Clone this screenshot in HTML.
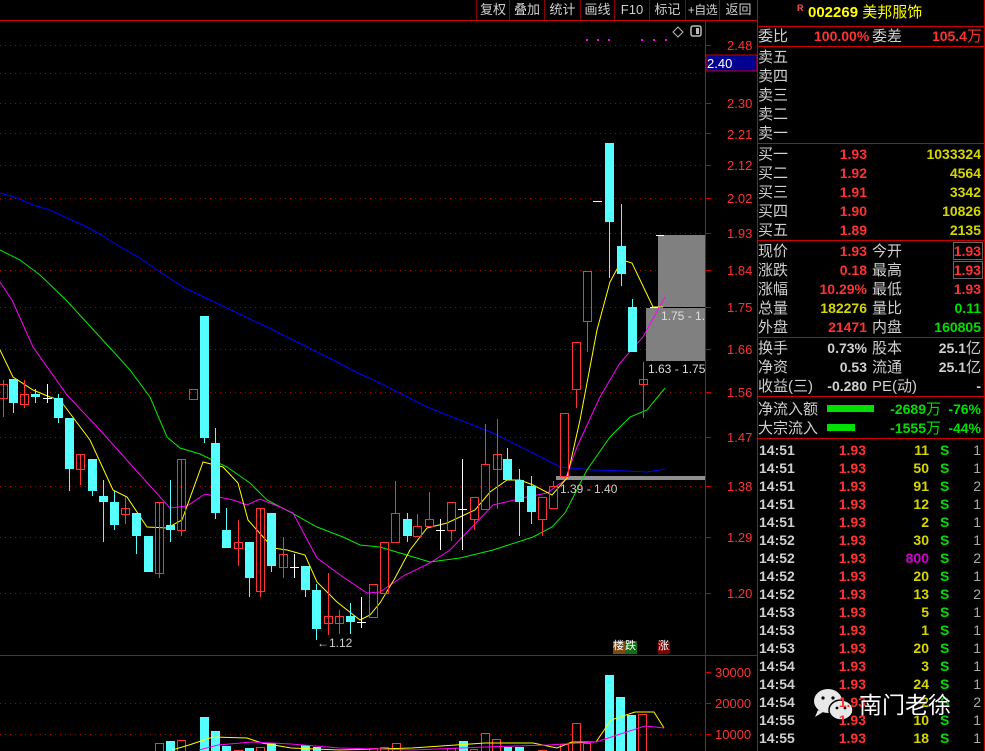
<!DOCTYPE html>
<html><head><meta charset="utf-8"><style>
*{margin:0;padding:0;box-sizing:border-box}
body{width:985px;height:751px;background:#000;overflow:hidden;position:relative;font-family:"Liberation Sans","Noto Sans CJK SC",sans-serif;}
.a{position:absolute;white-space:nowrap;line-height:1}
.tb{position:absolute;top:0;height:20px;color:#d0d0d0;font-size:13px;text-align:center;line-height:20px;border-left:1px solid #800;white-space:nowrap;overflow:hidden}
.rp{position:absolute;left:757px;font-size:15px;line-height:19px;white-space:nowrap}
.l{color:#d0d0d0}
.r{color:#ff3232}.y{color:#d6d600}.g{color:#00e000}.w{color:#d0d0d0}.m{color:#d000d0}
.hl{position:absolute;left:757px;width:228px;height:1px;background:#c00}
.ax{font-size:13px}
</style></head><body>
<svg width="985" height="751" style="position:absolute;left:0;top:0">
<line x1="0" y1="20.5" x2="757" y2="20.5" stroke="#c00"/>
<line x1="705.5" y1="20" x2="705.5" y2="751" stroke="#c00"/>
<line x1="757.5" y1="0" x2="757.5" y2="751" stroke="#c00"/>
<line x1="984.5" y1="0" x2="984.5" y2="751" stroke="#c00"/>
<line x1="0" y1="655.5" x2="757" y2="655.5" stroke="#c00"/>
<g stroke="#a00000" stroke-dasharray="1,4">
<line x1="0" y1="45.5" x2="705" y2="45.5"/><line x1="0" y1="73.5" x2="705" y2="73.5"/><line x1="0" y1="103.5" x2="705" y2="103.5"/><line x1="0" y1="133.5" x2="705" y2="133.5"/><line x1="0" y1="165.5" x2="705" y2="165.5"/><line x1="0" y1="198.5" x2="705" y2="198.5"/><line x1="0" y1="233.5" x2="705" y2="233.5"/><line x1="0" y1="270.5" x2="705" y2="270.5"/><line x1="0" y1="307.5" x2="705" y2="307.5"/><line x1="0" y1="349.5" x2="705" y2="349.5"/><line x1="0" y1="392.5" x2="705" y2="392.5"/><line x1="0" y1="437.5" x2="705" y2="437.5"/><line x1="0" y1="486.5" x2="705" y2="486.5"/><line x1="0" y1="537.5" x2="705" y2="537.5"/><line x1="0" y1="593.5" x2="705" y2="593.5"/>
<line x1="0" y1="703.5" x2="705" y2="703.5"/><line x1="0" y1="734.5" x2="705" y2="734.5"/>
</g>
<g stroke="#c00">
<line x1="705" y1="45.5" x2="711" y2="45.5"/><line x1="705" y1="103.5" x2="711" y2="103.5"/><line x1="705" y1="133.5" x2="711" y2="133.5"/><line x1="705" y1="165.5" x2="711" y2="165.5"/><line x1="705" y1="198.5" x2="711" y2="198.5"/><line x1="705" y1="233.5" x2="711" y2="233.5"/><line x1="705" y1="270.5" x2="711" y2="270.5"/><line x1="705" y1="307.5" x2="711" y2="307.5"/><line x1="705" y1="349.5" x2="711" y2="349.5"/><line x1="705" y1="392.5" x2="711" y2="392.5"/><line x1="705" y1="437.5" x2="711" y2="437.5"/><line x1="705" y1="486.5" x2="711" y2="486.5"/><line x1="705" y1="537.5" x2="711" y2="537.5"/><line x1="705" y1="593.5" x2="711" y2="593.5"/>
<line x1="705" y1="672.5" x2="711" y2="672.5"/><line x1="705" y1="703.5" x2="711" y2="703.5"/><line x1="705" y1="734.5" x2="711" y2="734.5"/>
</g>
<rect x="706" y="55" width="51" height="16" fill="#000090" stroke="#c00"/>
<rect x="658" y="235" width="47" height="72" fill="#808080"/>
<rect x="646" y="307" width="59" height="54" fill="#808080"/>
<line x1="646" y1="307.5" x2="705" y2="307.5" stroke="#000"/>
<rect x="556" y="476" width="149" height="4" fill="#909090"/>
<polyline fill="none" stroke="#0000ff" points="0,193 17,198 33,205 50,210 67,218 83,225 100,234 117,245 140,258 160,272 185,288 210,300 267,327 333,360 360,374 380,383 427,407 493,433 533,453 560,467 593,470 627,471 647,472 665,469"/>
<polyline fill="none" stroke="#00ee00" points="0,250 20,260 40,275 66,300 100,337 130,370 150,397 167,437 180,448 200,454 227,467 250,483 267,500 290,512 317,527 343,537 360,545 380,547 410,556 430,562 460,558 493,550 533,537 552,527 565,513 587,470 610,437 630,417 647,410 665,388"/>
<polyline fill="none" stroke="#ff00ff" points="0,282 12,300 33,347 67,395 100,430 133,467 170,508 187,506 205,494 233,500 247,505 260,499 280,507 293,513 317,558 343,577 367,593 380,592 405,575 430,563 450,550 493,505 527,497 547,493 565,480 577,447 600,397 620,363 643,337 665,297"/>
<polyline fill="none" stroke="#ffff00" points="0,350 13,377 33,390 50,397 60,400 90,440 113,490 127,497 147,527 167,528 182,520 203,462 223,467 238,483 248,520 273,548 287,550 305,555 317,582 337,602 360,620 370,615 380,603 395,578 410,550 427,528 447,523 475,510 490,492 507,480 520,480 533,485 552,495 567,478 580,420 597,330 610,282 622,260 632,263 653,307 663,307"/>
<g stroke="#ff3232" fill="none">
<line x1="3.5" y1="380" x2="3.5" y2="417"/><rect x="-0.5" y="384.5" width="8" height="14"/>
<line x1="24.5" y1="380" x2="24.5" y2="408"/><rect x="20.5" y="394.5" width="8" height="10"/>
<line x1="80.5" y1="454" x2="80.5" y2="485"/><rect x="76.5" y="454.5" width="8" height="15"/>
<line x1="125.5" y1="497" x2="125.5" y2="524"/><rect x="121.5" y="508.5" width="8" height="6"/>
<line x1="159.5" y1="502" x2="159.5" y2="578"/><rect x="155.5" y="502.5" width="8" height="71"/>
<line x1="181.5" y1="459" x2="181.5" y2="536"/><rect x="177.5" y="459.5" width="8" height="71"/>
<rect x="189.5" y="389.5" width="8" height="10"/>
<line x1="238.5" y1="520" x2="238.5" y2="566"/><rect x="234.5" y="542.5" width="8" height="6"/>
<line x1="260.5" y1="508" x2="260.5" y2="597"/><rect x="256.5" y="508.5" width="8" height="83"/>
<line x1="283.5" y1="537" x2="283.5" y2="578"/><rect x="279.5" y="554.5" width="8" height="13"/>
<line x1="328.5" y1="573" x2="328.5" y2="635"/><rect x="324.5" y="616.5" width="8" height="7"/>
<line x1="339.5" y1="610" x2="339.5" y2="634"/><rect x="335.5" y="616.5" width="8" height="7"/>
<rect x="369.5" y="584.5" width="8" height="33"/>
<rect x="380.5" y="542.5" width="8" height="51"/>
<line x1="395.5" y1="481" x2="395.5" y2="513"/><rect x="391.5" y="513.5" width="8" height="29"/>
<line x1="417.5" y1="514" x2="417.5" y2="526"/><rect x="413.5" y="526.5" width="8" height="10"/>
<line x1="429.5" y1="492" x2="429.5" y2="519"/><rect x="425.5" y="519.5" width="8" height="7"/>
<line x1="451.5" y1="530" x2="451.5" y2="541"/><rect x="447.5" y="502.5" width="8" height="28"/>
<line x1="474.5" y1="519" x2="474.5" y2="530"/><rect x="470.5" y="497.5" width="8" height="22"/>
<line x1="485.5" y1="424" x2="485.5" y2="464"/><rect x="481.5" y="464.5" width="8" height="45"/>
<line x1="497.5" y1="419" x2="497.5" y2="509"/><rect x="493.5" y="454.5" width="8" height="15"/>
<line x1="542.5" y1="519" x2="542.5" y2="536"/><rect x="538.5" y="497.5" width="8" height="22"/>
<line x1="553.5" y1="481" x2="553.5" y2="486"/><rect x="549.5" y="486.5" width="8" height="22"/>
<rect x="560.5" y="413.5" width="8" height="63"/>
<line x1="576.5" y1="389" x2="576.5" y2="408"/><rect x="572.5" y="342.5" width="8" height="47"/>
<line x1="587.5" y1="321" x2="587.5" y2="352"/><rect x="583.5" y="271.5" width="8" height="50"/>
<line x1="643.5" y1="362" x2="643.5" y2="418"/><rect x="639.5" y="379.5" width="8" height="5"/>
</g>
<g fill="#55ffff" stroke="#55ffff">
<line x1="13.5" y1="379" x2="13.5" y2="413"/><rect x="9" y="379" width="9" height="24" stroke="none"/>
<line x1="35.5" y1="389" x2="35.5" y2="403"/><rect x="31" y="394" width="9" height="3" stroke="none"/>
<line x1="58.5" y1="394" x2="58.5" y2="423"/><rect x="54" y="398" width="9" height="20" stroke="none"/>
<line x1="69.5" y1="418" x2="69.5" y2="491"/><rect x="65" y="418" width="9" height="51" stroke="none"/>
<line x1="92.5" y1="459" x2="92.5" y2="496"/><rect x="88" y="459" width="9" height="32" stroke="none"/>
<line x1="103.5" y1="480" x2="103.5" y2="542"/><rect x="99" y="496" width="9" height="6" stroke="none"/>
<line x1="114.5" y1="491" x2="114.5" y2="530"/><rect x="110" y="502" width="9" height="23" stroke="none"/>
<line x1="136.5" y1="513" x2="136.5" y2="554"/><rect x="132" y="513" width="9" height="23" stroke="none"/>
<rect x="144" y="536" width="9" height="36" stroke="none"/>
<line x1="170.5" y1="480" x2="170.5" y2="542"/><rect x="166" y="525" width="9" height="5" stroke="none"/>
<line x1="204.5" y1="316" x2="204.5" y2="443"/><rect x="200" y="316" width="9" height="122" stroke="none"/>
<line x1="215.5" y1="428" x2="215.5" y2="519"/><rect x="211" y="443" width="9" height="70" stroke="none"/>
<line x1="226.5" y1="508" x2="226.5" y2="548"/><rect x="222" y="530" width="9" height="18" stroke="none"/>
<line x1="249.5" y1="542" x2="249.5" y2="597"/><rect x="245" y="542" width="9" height="36" stroke="none"/>
<line x1="271.5" y1="513" x2="271.5" y2="572"/><rect x="267" y="513" width="9" height="53" stroke="none"/>
<line x1="305.5" y1="566" x2="305.5" y2="597"/><rect x="301" y="566" width="9" height="24" stroke="none"/>
<line x1="316.5" y1="584" x2="316.5" y2="640"/><rect x="312" y="590" width="9" height="39" stroke="none"/>
<line x1="350.5" y1="603" x2="350.5" y2="634"/><rect x="346" y="616" width="9" height="6" stroke="none"/>
<line x1="407.5" y1="513" x2="407.5" y2="542"/><rect x="403" y="519" width="9" height="17" stroke="none"/>
<line x1="507.5" y1="448" x2="507.5" y2="480"/><rect x="503" y="459" width="9" height="21" stroke="none"/>
<line x1="519.5" y1="469" x2="519.5" y2="536"/><rect x="515" y="480" width="9" height="22" stroke="none"/>
<line x1="531.5" y1="476" x2="531.5" y2="524"/><rect x="527" y="486" width="9" height="26" stroke="none"/>
<line x1="609.5" y1="143" x2="609.5" y2="278"/><rect x="605" y="143" width="9" height="79" stroke="none"/>
<line x1="621.5" y1="204" x2="621.5" y2="286"/><rect x="617" y="246" width="9" height="28" stroke="none"/>
<line x1="632.5" y1="299" x2="632.5" y2="352"/><rect x="628" y="307" width="9" height="45" stroke="none"/>
</g>
<g stroke="#fff">
<line x1="47.5" y1="384" x2="47.5" y2="403"/><line x1="43" y1="398.5" x2="52" y2="398.5"/>
<line x1="294.5" y1="554" x2="294.5" y2="578"/><line x1="290" y1="567.5" x2="299" y2="567.5"/>
<line x1="361.5" y1="597" x2="361.5" y2="628"/><line x1="357" y1="622.5" x2="366" y2="622.5"/>
<line x1="440.5" y1="519" x2="440.5" y2="550"/><line x1="436" y1="530.5" x2="445" y2="530.5"/>
<line x1="462.5" y1="459" x2="462.5" y2="550"/><line x1="458" y1="509.5" x2="467" y2="509.5"/>
<line x1="593" y1="201.5" x2="602" y2="201.5"/>
<line x1="656" y1="235.5" x2="664" y2="235.5"/><line x1="650" y1="307.5" x2="658" y2="307.5"/>
</g>
<g fill="#ff00ff"><rect x="586" y="39" width="2" height="2"/><rect x="597" y="39" width="2" height="2"/><rect x="608" y="39" width="2" height="2"/><rect x="641" y="39" width="2" height="2"/><rect x="653" y="39" width="2" height="2"/><rect x="665" y="39" width="2" height="2"/></g>
<path d="M678 27 L683 32 L678 37 L673 32 Z" fill="none" stroke="#bbb"/>
<rect x="691" y="26" width="10" height="10" rx="2" fill="none" stroke="#bbb" stroke-width="1.5"/><rect x="696" y="28" width="3" height="6" fill="#bbb"/>
<g fill="none" stroke="#ff3232">
<rect x="155.5" y="743.5" width="8" height="10"/><rect x="177.5" y="740.5" width="8" height="14"/><rect x="234.5" y="750.5" width="8" height="4"/><rect x="256.5" y="747.5" width="8" height="8"/>
<rect x="369.5" y="748.5" width="8" height="6"/><rect x="380.5" y="747.5" width="8" height="6"/><rect x="392.5" y="743.5" width="8" height="10"/>
<rect x="447.5" y="748.5" width="8" height="6"/><rect x="470.5" y="749.5" width="7" height="6"/><rect x="481.5" y="733.5" width="8" height="20"/><rect x="492.5" y="739.5" width="8" height="14"/>
<rect x="538.5" y="750.5" width="8" height="4"/><rect x="560.5" y="744.5" width="8" height="10"/><rect x="572.5" y="723.5" width="8" height="30"/><rect x="583.5" y="743.5" width="7" height="10"/><rect x="638.5" y="714.5" width="8" height="40"/>
</g>
<g fill="#55ffff">
<rect x="166" y="741" width="9" height="10"/><rect x="200" y="717" width="9" height="34"/><rect x="211" y="731" width="9" height="20"/><rect x="222" y="746" width="9" height="5"/><rect x="245" y="748" width="9" height="3"/><rect x="267" y="743" width="9" height="8"/>
<rect x="301" y="745" width="9" height="6"/><rect x="313" y="747" width="8" height="4"/><rect x="459" y="741" width="9" height="10"/><rect x="504" y="747" width="8" height="4"/><rect x="515" y="747" width="9" height="4"/>
<rect x="605" y="675" width="9" height="76"/><rect x="616" y="697" width="9" height="54"/><rect x="627" y="715" width="9" height="36"/>
</g>
<polyline fill="none" stroke="#ffff00" points="172,750 189,745 213,737 247,738 262,743 291,748 339,750 412,748 485,743 533,743 557,748 572,742 596,742 611,720 635,712 654,712 664,728"/>
<polyline fill="none" stroke="#ff00ff" points="199,750 218,745 252,742 291,744 339,748 412,750 485,747 548,745 596,742 645,726 655,727 664,728"/>
<ellipse cx="828" cy="701" rx="14" ry="12" fill="#e8e8e8"/><path d="M818 710 L815 717 L823 712 Z" fill="#e8e8e8"/>
<ellipse cx="841" cy="710" rx="12" ry="10" fill="#e8e8e8" stroke="#000" stroke-width="1.5"/>
<circle cx="823" cy="698" r="1.6" fill="#000"/><circle cx="833" cy="698" r="1.6" fill="#000"/><circle cx="837" cy="708" r="1.4" fill="#000"/><circle cx="845" cy="708" r="1.4" fill="#000"/>
</svg>
<div class="tb" style="left:476px;width:33px">复权</div><div class="tb" style="left:509px;width:35px">叠加</div><div class="tb" style="left:544px;width:36px">统计</div><div class="tb" style="left:580px;width:34px">画线</div><div class="tb" style="left:614px;width:35px">F10</div><div class="tb" style="left:649px;width:36px">标记</div><div class="tb" style="left:685px;width:34px;font-size:12px;letter-spacing:-0.5px">+自选</div><div class="tb" style="left:719px;width:38px">返回</div>
<div class="a r ax" style="left:727px;top:39px">2.48</div>
<div class="a ax" style="left:707px;top:57px;color:#fff">2.40</div>
<div class="a r ax" style="left:727px;top:97px">2.30</div><div class="a r ax" style="left:727px;top:128px">2.21</div><div class="a r ax" style="left:727px;top:159px">2.12</div><div class="a r ax" style="left:727px;top:192px">2.02</div><div class="a r ax" style="left:727px;top:227px">1.93</div><div class="a r ax" style="left:727px;top:264px">1.84</div><div class="a r ax" style="left:727px;top:301px">1.75</div><div class="a r ax" style="left:727px;top:343px">1.66</div><div class="a r ax" style="left:727px;top:386px">1.56</div><div class="a r ax" style="left:727px;top:431px">1.47</div><div class="a r ax" style="left:727px;top:480px">1.38</div><div class="a r ax" style="left:727px;top:531px">1.29</div><div class="a r ax" style="left:727px;top:587px">1.20</div>
<div class="a r ax" style="left:715px;top:666px">30000</div><div class="a r ax" style="left:715px;top:697px">20000</div><div class="a r ax" style="left:715px;top:728px">10000</div>
<div class="a" style="font-size:12px;left:661px;top:310px;color:#ddd">1.75 - 1.</div>
<div class="a" style="font-size:12px;left:648px;top:363px;color:#ddd">1.63 - 1.75</div>
<div class="a" style="font-size:12px;left:560px;top:483px;color:#ccc">1.39 - 1.40</div>
<div class="a" style="font-size:12px;left:317px;top:637px;color:#ccc">←1.12</div>
<div class="a" style="font-size:11px;left:613px;top:641px;color:#fff;background:#7a4a10;width:12px;height:13px">楼</div>
<div class="a" style="font-size:11px;left:625px;top:641px;color:#fff;background:#107010;width:12px;height:13px">跌</div>
<div class="a" style="font-size:11px;left:658px;top:641px;color:#fff;background:#800000;width:12px;height:13px">涨</div>
<div class="hl" style="top:26px"></div><div class="hl" style="top:46px"></div><div class="hl" style="top:143px"></div><div class="hl" style="top:240px"></div><div class="hl" style="top:337px"></div><div class="hl" style="top:396px"></div><div class="hl" style="top:438px"></div>
<div class="a" style="left:797px;top:4px;font-size:9px;color:#ff5050;font-weight:bold">R</div>
<div class="a y" style="left:808px;top:5px;font-size:15px;font-weight:bold;color:#ffff00">002269 <span style="font-weight:normal">美邦服饰</span></div>
<div class="rp" style="top:27px;width:228px"><span class="l" style="position:absolute;left:1px">委比</span><span class="r" style="position:absolute;left:57px;font-weight:bold;font-size:14px">100.00%</span><span class="l" style="position:absolute;left:115px">委差</span><span class="r" style="position:absolute;right:3px;font-weight:bold;font-size:14px">105.4<span style="font-weight:normal;font-size:15px">万</span></span></div>
<div class="rp l" style="top:48px;left:758px">卖五<br>卖四<br>卖三<br>卖二<br>卖一</div>
<div class="rp l" style="top:145px;left:758px">买一<br>买二<br>买三<br>买四<br>买五</div>
<div class="rp r" style="top:145px;left:810px;width:57px;text-align:right;font-size:14px;font-weight:bold">1.93<br>1.92<br>1.91<br>1.90<br>1.89</div>
<div class="rp y" style="top:145px;left:880px;width:101px;text-align:right;font-size:14px;font-weight:bold">1033324<br>4564<br>3342<br>10826<br>2135</div>
<div class="rp l" style="top:242px;left:758px">现价<br>涨跌<br>涨幅<br>总量<br>外盘</div>
<div class="rp" style="top:242px;left:790px;width:77px;text-align:right;font-size:14px;font-weight:bold"><span class="r">1.93</span><br><span class="r">0.18</span><br><span class="r">10.29%</span><br><span class="y">182276</span><br><span class="r">21471</span></div>
<div class="rp l" style="top:242px;left:872px">今开<br>最高<br>最低<br>量比<br>内盘</div>
<div class="rp" style="top:242px;left:910px;width:71px;text-align:right;font-size:14px;font-weight:bold"><span class="r">1.93</span><br><span class="r">1.93</span><br><span class="r">1.93</span><br><span class="g">0.11</span><br><span class="g">160805</span></div>
<div class="a" style="left:953px;top:242px;width:30px;height:18px;border:1px solid #666"></div>
<div class="a" style="left:953px;top:261px;width:30px;height:18px;border:1px solid #666"></div>
<div class="rp l" style="top:339px;left:758px">换手<br>净资<br>收益(三)</div>
<div class="rp w" style="top:339px;left:810px;width:57px;text-align:right;font-size:14px;font-weight:bold">0.73%<br>0.53<br>-0.280</div>
<div class="rp l" style="top:339px;left:872px">股本<br>流通<br>PE(动)</div>
<div class="rp w" style="top:339px;left:910px;width:71px;text-align:right;font-size:14px;font-weight:bold">25.1<span style="font-weight:normal;font-size:15px">亿</span><br>25.1<span style="font-weight:normal;font-size:15px">亿</span><br>-</div>
<div class="rp l" style="top:400px;left:758px">净流入额<br>大宗流入</div>
<div class="a" style="left:827px;top:405px;width:47px;height:7px;background:#00e000"></div>
<div class="a" style="left:827px;top:424px;width:28px;height:7px;background:#00e000"></div>
<div class="rp g" style="top:400px;left:870px;width:71px;text-align:right;font-size:14px;font-weight:bold">-2689<span style="font-weight:normal;font-size:15px">万</span><br>-1555<span style="font-weight:normal;font-size:15px">万</span></div>
<div class="rp g" style="top:400px;left:940px;width:41px;text-align:right;font-size:14px;font-weight:bold">-76%<br>-44%</div>
<div class="rp w" style="top:441px;left:759px;font-size:14px;line-height:18px;font-weight:bold">14:51<br>14:51<br>14:51<br>14:51<br>14:51<br>14:52<br>14:52<br>14:52<br>14:52<br>14:53<br>14:53<br>14:53<br>14:54<br>14:54<br>14:54<br>14:55<br>14:55</div>
<div class="rp r" style="top:441px;left:820px;width:46px;text-align:right;font-size:14px;line-height:18px;font-weight:bold">1.93<br>1.93<br>1.93<br>1.93<br>1.93<br>1.93<br>1.93<br>1.93<br>1.93<br>1.93<br>1.93<br>1.93<br>1.93<br>1.93<br>1.93<br>1.93<br>1.93</div>
<div class="rp y" style="top:441px;left:880px;width:49px;text-align:right;font-size:14px;line-height:18px;font-weight:bold">11<br>50<br>91<br>12<br>2<br>30<br><span class="m">800</span><br>20<br>13<br>5<br>1<br>20<br>3<br>24<br>2<br>10<br>18</div>
<div class="rp g" style="top:441px;left:940px;font-size:14px;line-height:18px;font-weight:bold">S<br>S<br>S<br>S<br>S<br>S<br>S<br>S<br>S<br>S<br>S<br>S<br>S<br>S<br>S<br>S<br>S</div>
<div class="rp" style="top:441px;left:960px;width:21px;text-align:right;font-size:14px;line-height:18px;color:#aaa">1<br>1<br>2<br>1<br>1<br>1<br>2<br>1<br>2<br>1<br>1<br>1<br>1<br>1<br>2<br>1<br>1</div>
<div class="a" style="left:859px;top:694px;font-size:23px;color:#fff;text-shadow:0 0 2px #000">南门老徐</div>
</body></html>
